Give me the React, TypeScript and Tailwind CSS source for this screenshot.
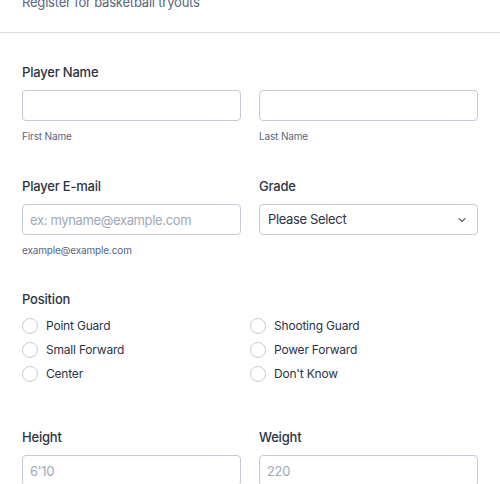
import { ChevronDown } from 'lucide-react';

const positions = ['Point Guard', 'Shooting Guard', 'Small Forward', 'Power Forward', 'Center', "Don't Know"];

function Label({ children }: { children: React.ReactNode }) {
  return <label className="block text-[13px] leading-[20px] font-medium tracking-[-0.2px] text-[#2c3345]">{children}</label>;
}

function TextInput({ placeholder }: { placeholder?: string }) {
  return (
    <input
      type="text"
      placeholder={placeholder}
      className="mt-2 block h-[31px] w-full rounded-[4px] border border-[#c3cad8] bg-white px-[7px] text-[13px] tracking-[-0.35px] text-[#2c3345] placeholder-[#a0a8b8] outline-none"
    />
  );
}

function SubLabel({ children }: { children: React.ReactNode }) {
  return <p className="mt-[8px] text-[10px] leading-[14px] tracking-[-0.15px] text-[#57647e]">{children}</p>;
}

export default function App() {
  return (
    <div className="h-[484px] w-[500px] overflow-hidden bg-white" style={{ fontFamily: 'Inter, "Noto Sans", sans-serif' }}>
      <div className="border-b border-[#dadde6] px-[22px] pb-[20px]">
        <p className="-mt-[8px] text-[13px] leading-[20px] tracking-[-0.2px] text-[#57647e]">Register for basketball tryouts</p>
      </div>

      <div className="px-[22px] pt-[29px]">
        <Label>Player Name</Label>
        <div className="grid grid-cols-2 gap-x-[18px]">
          <div>
            <TextInput />
            <SubLabel>First Name</SubLabel>
          </div>
          <div>
            <TextInput />
            <SubLabel>Last Name</SubLabel>
          </div>
        </div>

        <div className="mt-[33px] grid grid-cols-2 gap-x-[18px]">
          <div>
            <Label>Player E-mail</Label>
            <TextInput placeholder="ex: myname@example.com" />
            <SubLabel>example@example.com</SubLabel>
          </div>
          <div>
            <Label>Grade</Label>
            <div className="relative mt-2 flex h-[31px] w-full items-center rounded-[4px] border border-[#c3cad8] bg-white px-[8px]">
              <span className="text-[13px] tracking-[-0.35px] text-[#2c3345]">Please Select</span>
              <ChevronDown className="absolute right-[9px] h-[12px] w-[12px] text-[#57647e]" strokeWidth={2.2} />
            </div>
          </div>
        </div>

        <div className="mt-[32px]">
          <Label>Position</Label>
          <div className="mt-[5px] grid grid-cols-2">
            {positions.map(p => (
              <div key={p} className="flex h-[24px] items-center gap-2">
                <span className="h-[16px] w-[16px] rounded-full border border-[#c3cad8] bg-white" />
                <span className="text-[12px] tracking-[-0.2px] text-[#2c3345]">{p}</span>
              </div>
            ))}
          </div>
        </div>

        <div className="mt-[41px] grid grid-cols-2 gap-x-[18px]">
          <div>
            <Label>Height</Label>
            <TextInput placeholder="6'10" />
          </div>
          <div>
            <Label>Weight</Label>
            <TextInput placeholder="220" />
          </div>
        </div>
      </div>
    </div>
  );
}
